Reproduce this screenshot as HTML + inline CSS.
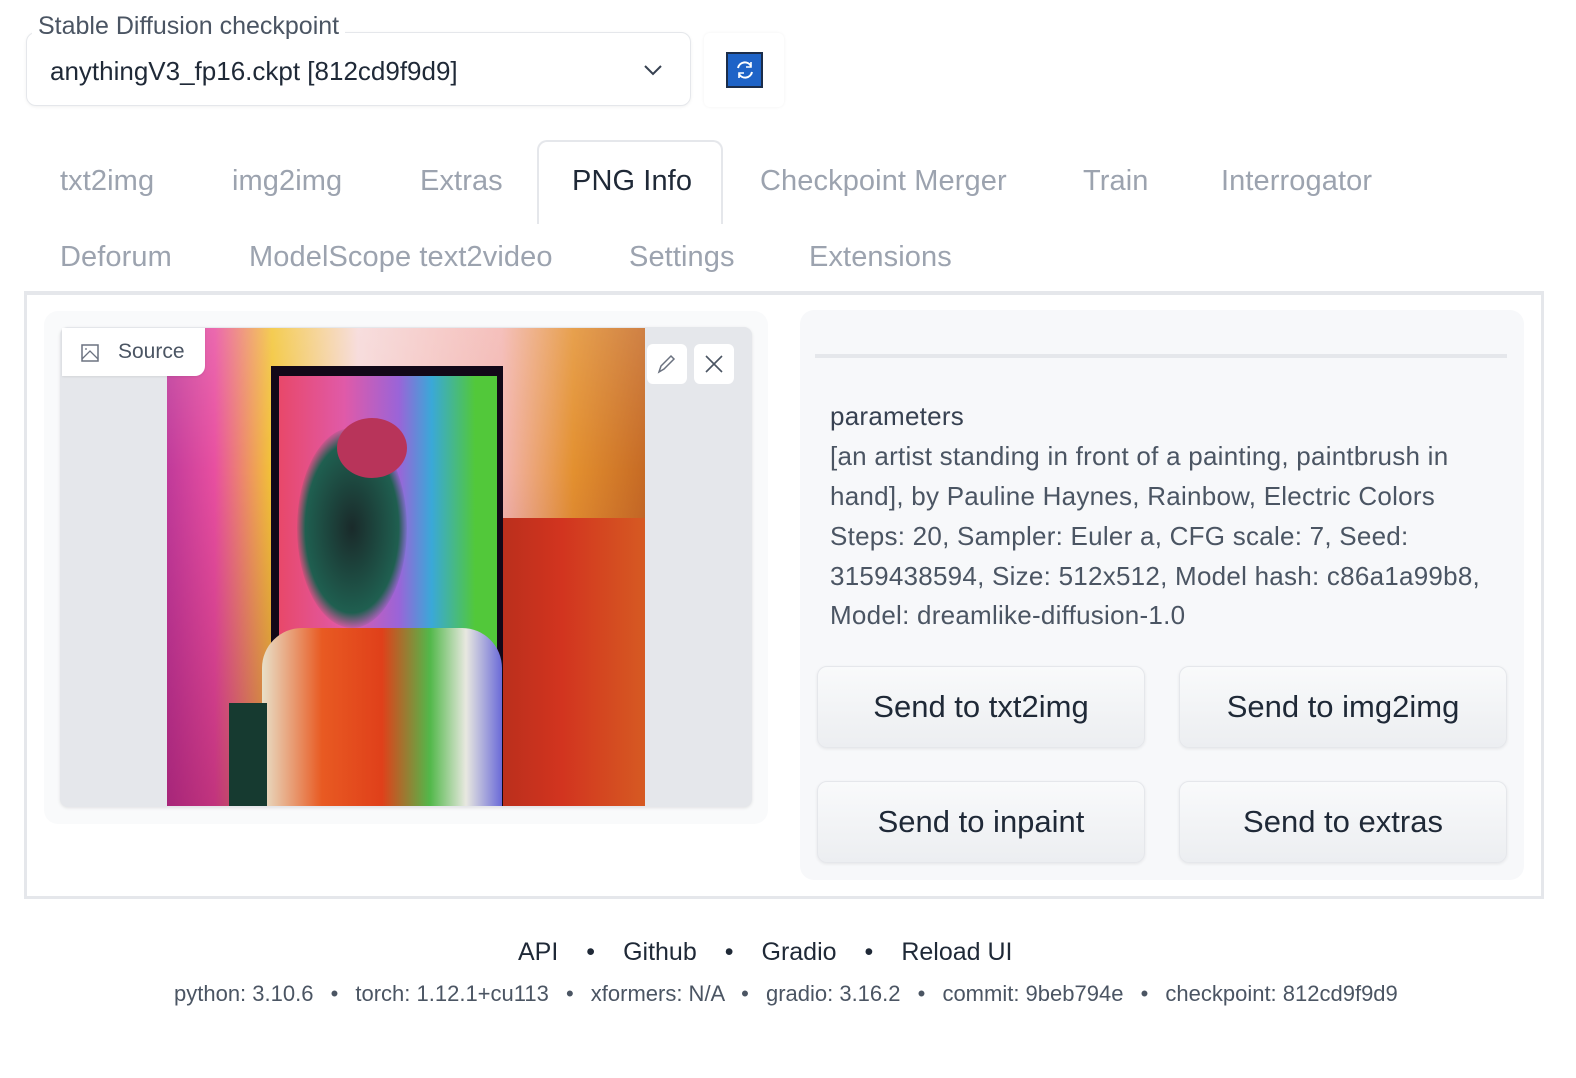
<!DOCTYPE html>
<html><head><meta charset="utf-8"><style>
*{box-sizing:border-box;margin:0;padding:0}
body{width:1576px;height:1078px;background:#fff;font-family:"Liberation Sans",sans-serif;position:relative;overflow:hidden;color:#374151}
.a{position:absolute;white-space:nowrap}
.tab{position:absolute;font-size:29px;color:#9ca3af;letter-spacing:0.1px}
.btn{position:absolute;width:328px;height:82px;border:1px solid #e5e7eb;border-radius:10px;background:linear-gradient(#f9fafb,#eceef1);box-shadow:0 1px 3px rgba(0,0,0,.08);font-size:31px;color:#1f2937;display:flex;align-items:center;justify-content:center}
.p{position:absolute;left:830px;font-size:26px;letter-spacing:0.25px;color:#4b5563;white-space:nowrap}
</style></head><body>
<div class="a" style="left:26px;top:32px;width:665px;height:74px;border:1px solid #e5e7eb;border-radius:10px;box-shadow:0 1px 3px rgba(0,0,0,.06)"></div>
<div class="a" style="left:32px;top:12px;background:#fff;padding:0 6px;font-size:25px;color:#4b5563">Stable Diffusion checkpoint</div>
<div class="a" style="left:50px;top:56px;font-size:26px;color:#1f2937">anythingV3_fp16.ckpt [812cd9f9d9]</div>
<svg class="a" style="left:642px;top:62px" width="22" height="16"><path d="M3 4l8 8 8-8" stroke="#374151" stroke-width="2" fill="none"/></svg>
<div class="a" style="left:704px;top:33px;width:80px;height:74px;border-radius:6px;box-shadow:0 0 3px rgba(0,0,0,.06)"></div>
<div class="a" style="left:726px;top:52px;width:37px;height:36px;background:#1e63c7;border:2px solid #1b2d4a"></div>
<svg class="a" style="left:733px;top:58px" width="24" height="24"><path d="M5 10a7 7 0 0 1 13-2M19 14a7 7 0 0 1-13 2" stroke="#fff" stroke-width="2" fill="none"/><path d="M18 4v5h-5M6 20v-5h5" stroke="#fff" stroke-width="1.6" fill="none"/></svg>

<div class="a" style="left:537px;top:140px;width:186px;height:84px;border:2px solid #e5e7eb;border-bottom:none;border-radius:10px 10px 0 0;background:#fff"></div>
<div class="tab" style="left:60px;top:165px">txt2img</div>
<div class="tab" style="left:232px;top:165px">img2img</div>
<div class="tab" style="left:420px;top:165px">Extras</div>
<div class="tab" style="left:572px;top:165px;color:#1f2937">PNG Info</div>
<div class="tab" style="left:760px;top:165px">Checkpoint Merger</div>
<div class="tab" style="left:1083px;top:165px">Train</div>
<div class="tab" style="left:1221px;top:165px">Interrogator</div>
<div class="tab" style="left:60px;top:241px">Deforum</div>
<div class="tab" style="left:249px;top:241px">ModelScope text2video</div>
<div class="tab" style="left:629px;top:241px">Settings</div>
<div class="tab" style="left:809px;top:241px">Extensions</div>

<div class="a" style="left:24px;top:291px;width:1520px;height:608px;border:3px solid #e5e7eb;border-top-width:4px"></div>

<div class="a" style="left:44px;top:311px;width:724px;height:513px;background:#f9fafb;border-radius:14px"></div>
<div class="a" style="left:60px;top:327px;width:692px;height:480px;background:#e5e7eb;border-radius:8px;box-shadow:0 1px 3px rgba(0,0,0,.1)"></div>
<div class="a" style="left:167px;top:328px;width:478px;height:478px;overflow:hidden;background:linear-gradient(90deg,#c03a9a 0%,#e84fa0 10%,#f2c435 22%,#f6d8d8 40%,#f3b5b0 70%,#e3902f 85%,#c66a24 100%)">
 <div class="a" style="left:0;top:0;width:478px;height:478px;background:linear-gradient(180deg,rgba(255,255,255,.15),rgba(0,0,0,0) 30%,rgba(120,0,60,.35))"></div>
 <div class="a" style="left:270px;top:190px;width:208px;height:288px;background:linear-gradient(90deg,#a02a1a,#d2341f 60%,#d65a22)"></div>
 <div class="a" style="left:104px;top:38px;width:232px;height:440px;background:#120818"></div>
 <div class="a" style="left:112px;top:48px;width:218px;height:430px;background:linear-gradient(90deg,#e8486a,#e05aa8 30%,#9a64d8 55%,#3aa8d8 70%,#52c83a 90%)"></div>
 <div class="a" style="left:130px;top:100px;width:110px;height:200px;border-radius:50%;background:radial-gradient(#1a2a2a,#1f5f50 60%,rgba(40,120,90,0) 72%)"></div>
 <div class="a" style="left:170px;top:90px;width:70px;height:60px;border-radius:50%;background:#b8345a"></div>
 <div class="a" style="left:95px;top:300px;width:240px;height:178px;border-radius:40px 40px 0 0;background:linear-gradient(90deg,#e8e0c8,#e85a22 25%,#e0401a 50%,#52b84a 70%,#e8e8e0 85%,#6a6ad8)"></div>
 <div class="a" style="left:62px;top:375px;width:38px;height:103px;background:#163a30"></div>
</div>
<div class="a" style="left:62px;top:328px;width:143px;height:48px;background:#fff;border-radius:0 0 10px 0;box-shadow:0 1px 2px rgba(0,0,0,.08)"></div>
<svg class="a" style="left:80px;top:343px" width="20" height="20"><rect x="2" y="2" width="16" height="16" fill="none" stroke="#6b7280" stroke-width="1.5"/><path d="M2 16l8-8 8 8M5 6h2" stroke="#6b7280" stroke-width="1.3" fill="none"/></svg>
<div class="a" style="left:118px;top:340px;font-size:21px;color:#4b5563">Source</div>
<div class="a" style="left:647px;top:344px;width:40px;height:40px;background:#fff;border-radius:6px"></div>
<div class="a" style="left:694px;top:344px;width:40px;height:40px;background:#fff;border-radius:6px"></div>
<svg class="a" style="left:654px;top:352px" width="24" height="24"><path d="M5 20l2-6 10-10 3 3-10 10z" stroke="#6b7280" stroke-width="1.5" fill="none"/></svg>
<svg class="a" style="left:702px;top:352px" width="24" height="24"><path d="M4 4l16 16M20 4L4 20" stroke="#4b5563" stroke-width="1.6"/></svg>

<div class="a" style="left:800px;top:310px;width:724px;height:570px;background:#f7f8fa;border-radius:14px"></div>
<div class="a" style="left:815px;top:354px;width:692px;height:4px;background:#e5e7eb"></div>
<div class="p" style="top:401px;color:#374151">parameters</div>
<div class="p" style="top:441px">[an artist standing in front of a painting, paintbrush in</div>
<div class="p" style="top:481px">hand], by Pauline Haynes, Rainbow, Electric Colors</div>
<div class="p" style="top:521px">Steps: 20, Sampler: Euler a, CFG scale: 7, Seed:</div>
<div class="p" style="top:561px">3159438594, Size: 512x512, Model hash: c86a1a99b8,</div>
<div class="p" style="top:600px">Model: dreamlike-diffusion-1.0</div>
<div class="btn" style="left:817px;top:666px">Send to txt2img</div>
<div class="btn" style="left:1179px;top:666px">Send to img2img</div>
<div class="btn" style="left:817px;top:781px">Send to inpaint</div>
<div class="btn" style="left:1179px;top:781px">Send to extras</div>

<div class="a" style="left:518px;top:938px;font-size:25px;color:#1f2937">API<span style="margin:0 28px">•</span>Github<span style="margin:0 28px">•</span>Gradio<span style="margin:0 28px">•</span>Reload UI</div>
<div class="a" style="left:174px;top:981px;font-size:22px;color:#4b5563">python: 3.10.6 <span style="margin:0 11px">•</span> torch: 1.12.1+cu113 <span style="margin:0 11px">•</span> xformers: N/A <span style="margin:0 11px">•</span> gradio: 3.16.2 <span style="margin:0 11px">•</span> commit: 9beb794e <span style="margin:0 11px">•</span> checkpoint: 812cd9f9d9</div>
</body></html>
